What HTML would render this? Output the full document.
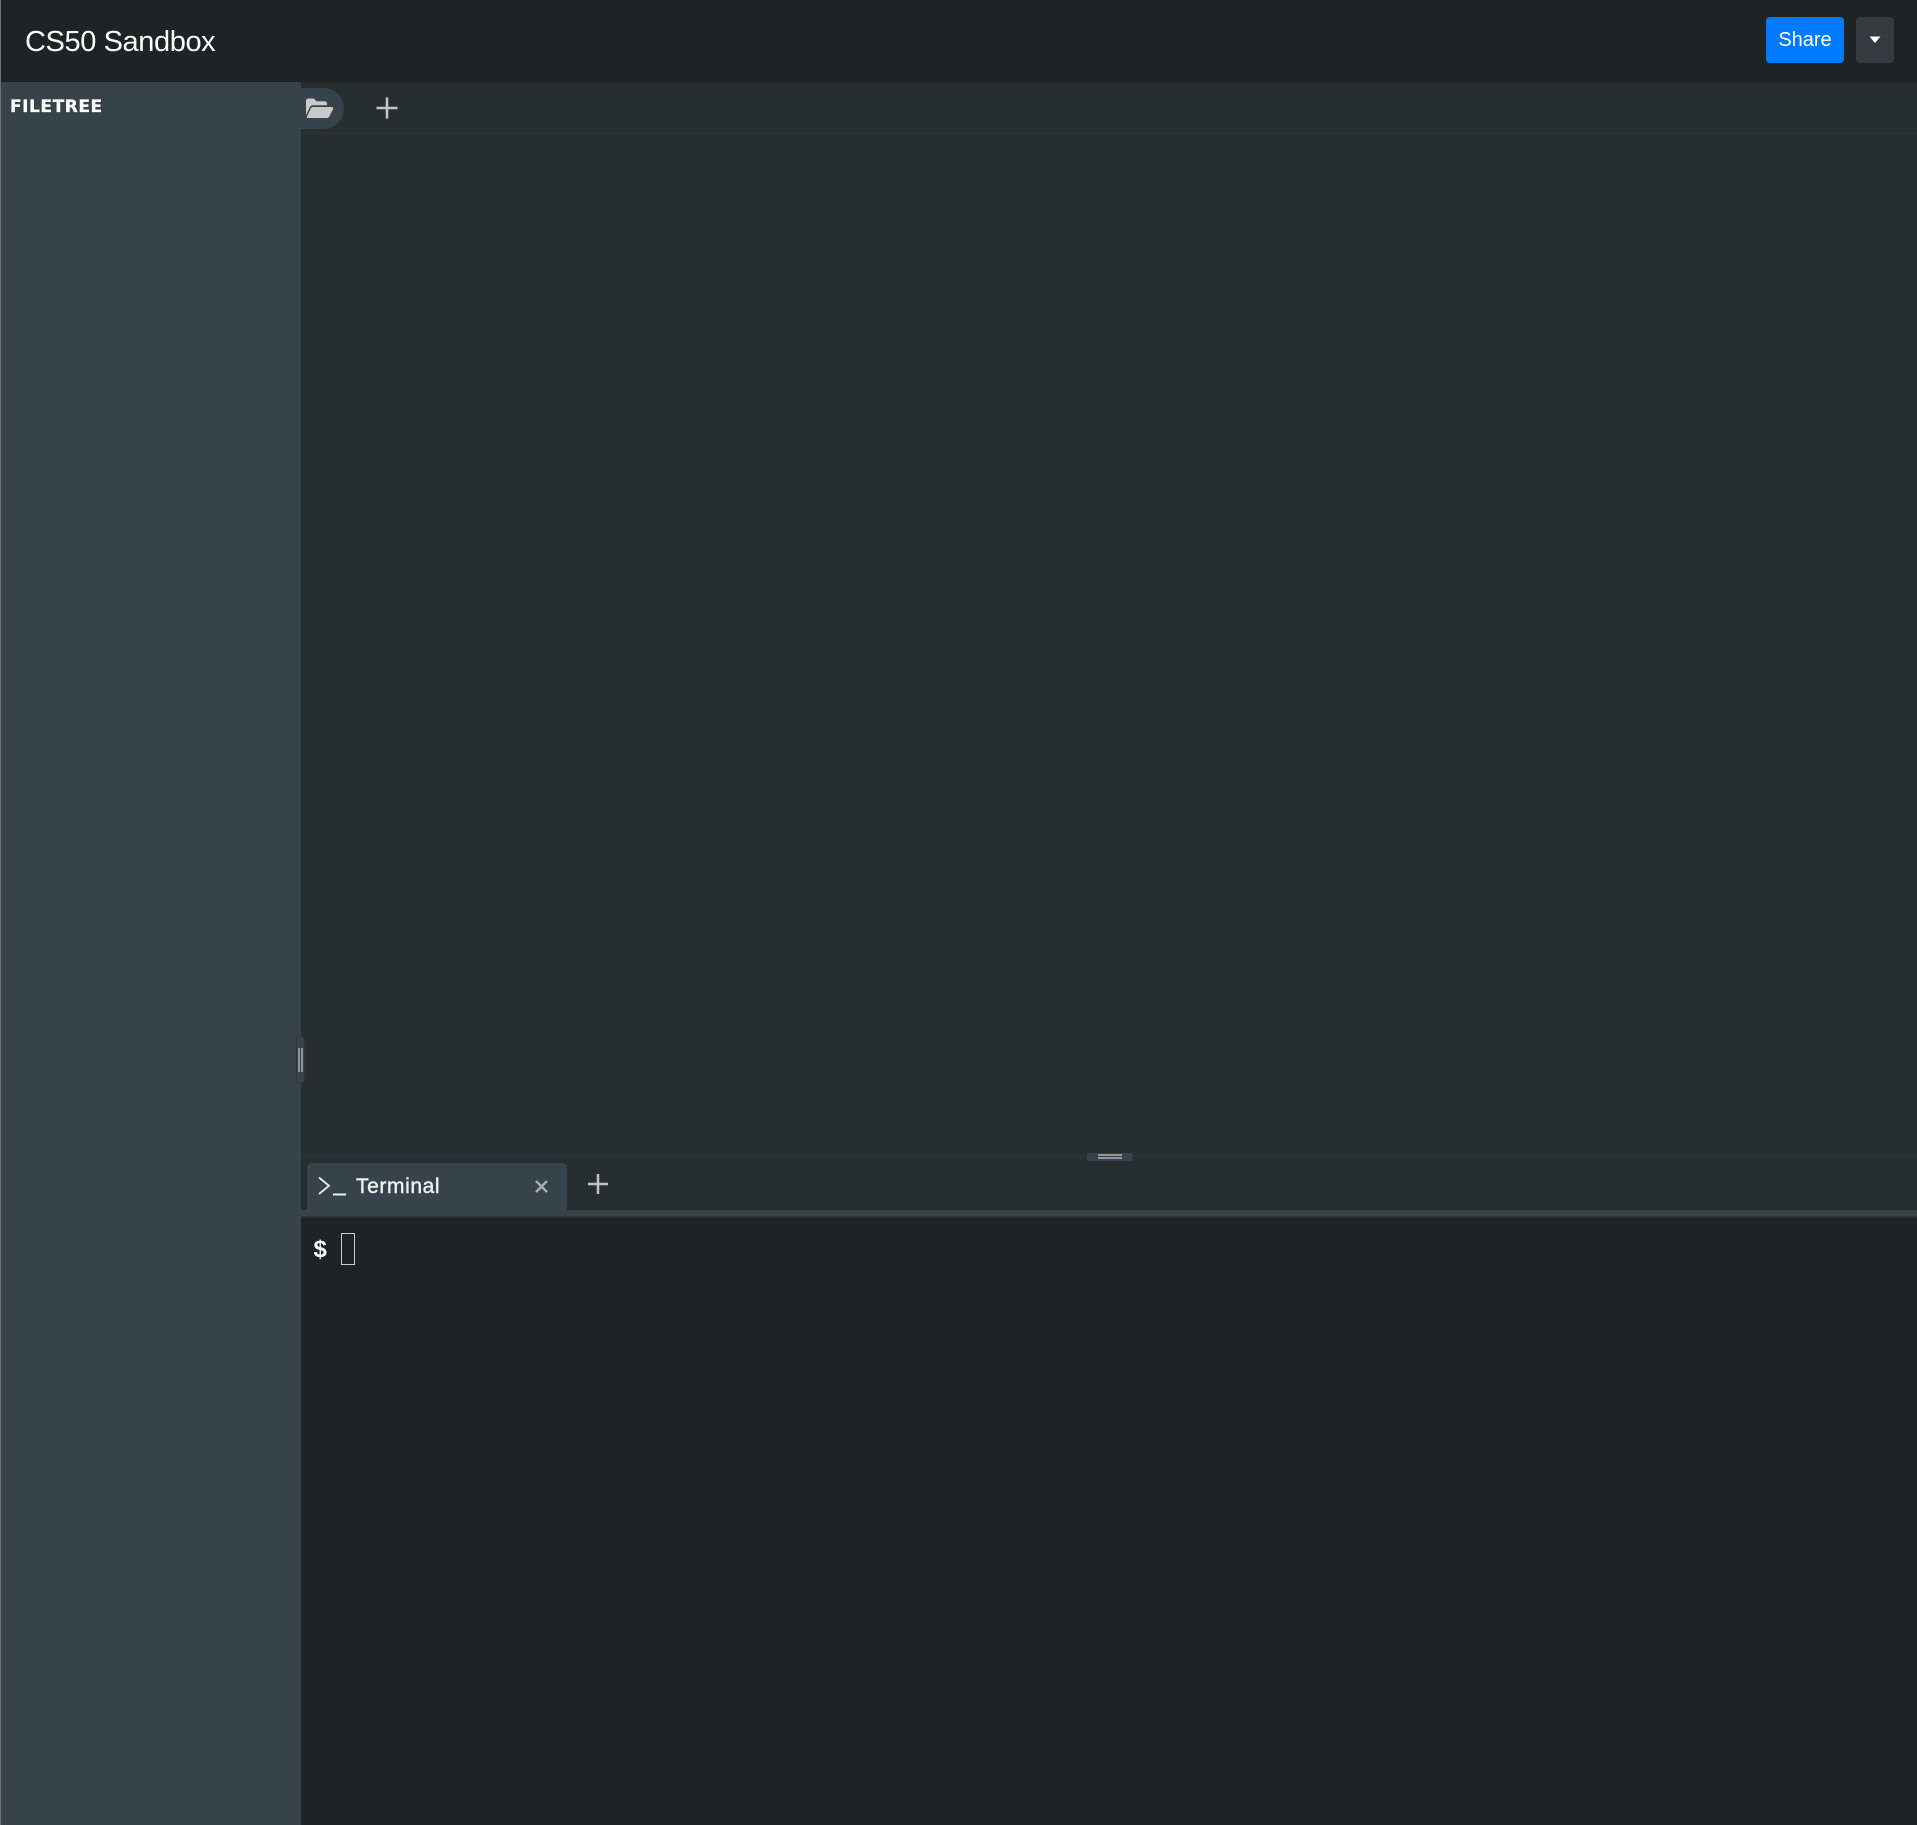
<!DOCTYPE html>
<html>
<head>
<meta charset="utf-8">
<style>
html,body{margin:0;padding:0;background:#1e2426;width:1917px;height:1825px;overflow:hidden}
body{position:relative;font-family:"Liberation Sans",sans-serif}
div,span{position:absolute;display:block}
svg{position:absolute;display:block}
</style>
</head>
<body>
<div style="left:0;top:0;width:1917px;height:82px;background:#1e2426"></div>
<div style="left:0;top:0;width:1px;height:1825px;background:#6b7073"></div>
<div style="left:25px;top:23px;font-size:29px;line-height:38px;color:#fff;white-space:nowrap;letter-spacing:-.4px">CS50 Sandbox</div>
<div style="left:1766px;top:17px;width:78px;height:46px;background:#007bff;border-radius:4px;color:#fff;font-size:20px;line-height:47px;text-align:center">Share</div>
<div style="left:1856px;top:17px;width:38px;height:46px;background:#343a40;border-radius:4px"></div>
<svg style="left:1868px;top:36px" width="14" height="8"><path d="M1.500 0.500H12.500L7 7Z" fill="#fff"/></svg>

<!-- sidebar -->
<div style="left:1px;top:82px;width:300px;height:1743px;background:#37434a"></div>
<div style="left:10px;top:97px;font-family:'DejaVu Sans',sans-serif;font-weight:700;font-size:17px;line-height:20px;color:#fff;letter-spacing:.55px;-webkit-text-stroke:.3px #fff;white-space:nowrap">FILETREE</div>

<!-- editor -->
<div style="left:301px;top:82px;width:1616px;height:1074px;background:#262e31"></div>
<div style="left:301px;top:132px;width:1616px;height:2px;background:#2b3033"></div>
<div style="left:301px;top:88px;width:43px;height:41px;background:#37434a;border-radius:0 21px 21px 0"></div>
<svg style="left:305px;top:97px" width="29" height="22" viewBox="0 0 29 22"><path d="M1 4C1 2.700 2 1.500 3.300 1.500H8.700L11.500 4.300H19.500C21 4.300 22 5.300 22 6.800V8.300H8C6.500 8.300 5.500 9 4.900 10.200L1 18ZM8.100 10H26.500C27.800 10 28.500 11.300 28 12.300L24.300 19.500C23.800 20.500 23 21 21.800 21H2.800C2 21 1.700 20.200 2 19.500L5.900 11.300C6.300 10.500 7.100 10 8.100 10Z" fill="#c8c9c9"/></svg>
<svg style="left:375px;top:96px" width="24" height="24"><path d="M12 1.500V22.500M1.500 12H22.500" stroke="#c2c3c3" stroke-width="2.600" fill="none"/></svg>

<!-- vertical resize handle -->
<div style="left:296px;top:1036px;width:9px;height:47px;background:#37434a;border:1px solid #2d3338;box-sizing:border-box;border-radius:3px"></div>
<div style="left:298px;top:1048px;width:2px;height:24px;background:#8e9396"></div>
<div style="left:301px;top:1048px;width:2px;height:24px;background:#8e9396"></div>

<!-- terminal header -->
<div style="left:301px;top:1156px;width:1616px;height:54px;background:#262e31"></div>
<div style="left:301px;top:1156px;width:1616px;height:1px;background:#2f3436"></div>
<div style="left:1087px;top:1153px;width:46px;height:8px;background:#37434a;border-radius:2px"></div>
<div style="left:1098px;top:1154px;width:24px;height:2px;background:#92979a"></div>
<div style="left:1098px;top:1157px;width:24px;height:2px;background:#92979a"></div>

<div style="left:301px;top:1210px;width:1616px;height:7px;background:#37434a"></div>
<div style="left:301px;top:1216px;width:1616px;height:2px;background:#2c3134"></div>
<div style="left:307px;top:1163px;width:260px;height:53px;background:#37434a;border-radius:5px 5px 0 0"></div>
<svg style="left:318px;top:1176px" width="28" height="22"><path d="M1 1.500L11 9.800L1 18" stroke="#eceded" stroke-width="1.800" fill="none"/><path d="M15 18.500H28" stroke="#eceded" stroke-width="2" fill="none"/></svg>
<div style="left:356px;top:1173px;font-family:'Liberation Sans',sans-serif;font-size:21px;line-height:27px;letter-spacing:.6px;color:#eef0f0;-webkit-text-stroke:.4px #eef0f0;white-space:nowrap">Terminal</div>
<svg style="left:534px;top:1179px" width="15" height="15"><path d="M2 2L13 13M13 2L2 13" stroke="#a9adaf" stroke-width="2.400" fill="none"/></svg>
<svg style="left:587px;top:1173px" width="22" height="22"><path d="M11 1V21M1 11H21" stroke="#c2c3c3" stroke-width="2.500" fill="none"/></svg>

<!-- terminal -->
<div style="left:301px;top:1218px;width:1616px;height:607px;background:#1e2426"></div>
<div style="left:313px;top:1238px;font-family:'Liberation Mono',monospace;font-size:24px;line-height:28px;color:#fff;font-weight:700">$</div>
<div style="left:341px;top:1233px;width:14px;height:32px;border:1px solid #c9cbcc;box-sizing:border-box"></div>
</body>
</html>
